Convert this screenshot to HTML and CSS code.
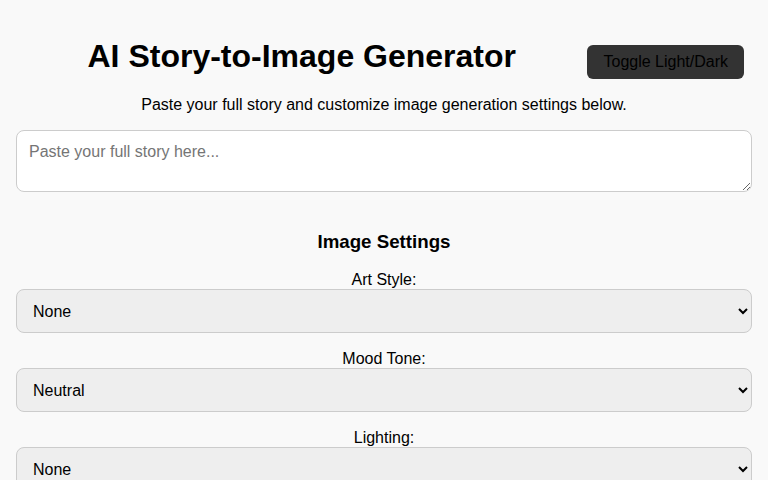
FILE: index.html
```html
<!DOCTYPE html>
<html lang="en">
<head>
    <meta charset="UTF-8">
    <meta name="viewport" content="width=device-width, initial-scale=1.0">
    <title>AI Story-to-Image Generator</title>
    <link rel="stylesheet" href="styles.css">
</head>
<body>

    <header class="top-bar">
        <h1>AI Story-to-Image Generator</h1>
        <button id="toggle-theme">Toggle Light/Dark</button>
    </header>

    <p class="intro">Paste your full story and customize image generation settings below.</p>

    <textarea id="story" placeholder="Paste your full story here..."></textarea>

    <h3>Image Settings</h3>

    <label for="art-style">Art Style:</label>
    <select id="art-style">
        <option>None</option>
        <option>Watercolor</option>
        <option>Anime</option>
    </select>

    <label for="mood">Mood Tone:</label>
    <select id="mood">
        <option>Neutral</option>
        <option>Happy</option>
        <option>Dark</option>
    </select>

    <label for="lighting">Lighting:</label>
    <select id="lighting">
        <option>None</option>
        <option>Soft</option>
        <option>Dramatic</option>
    </select>

</body>
</html>
```

FILE: styles.css
```css
body {
    font-family: "Liberation Sans", Arial, sans-serif;
    background-color: #f9f9f9;
    color: #000;
    margin: 0;
    padding: 16px;
}

.top-bar {
    display: flex;
    align-items: flex-start;
    padding-right: 8px;
}

.top-bar h1 {
    flex: 1;
    text-align: center;
    font-size: 32px;
    line-height: 37px;
    margin: 22px 0 21px;
}

#toggle-theme {
    margin-top: 29px;
    height: 34px;
    padding: 0 16px;
    background-color: #333;
    color: #000;
    border: none;
    border-radius: 6px;
    font-family: inherit;
    font-size: 16px;
    cursor: pointer;
}

.intro {
    margin: 0 0 16px;
    text-align: center;
    font-size: 16px;
    line-height: 18px;
}

textarea {
    display: block;
    width: 100%;
    box-sizing: border-box;
    height: 62px;
    padding: 12px;
    border: 1px solid #ccc;
    border-radius: 8px;
    background-color: #fff;
    font-family: inherit;
    font-size: 16px;
}

textarea::placeholder {
    color: #757575;
}

h3 {
    text-align: center;
    font-size: 18.72px;
    line-height: 22px;
    margin: 39px 0 17px;
}

label {
    display: block;
    text-align: center;
    font-size: 16px;
    line-height: 19px;
}

select {
    display: block;
    width: 100%;
    box-sizing: border-box;
    height: 44px;
    padding: 0 12px;
    margin-bottom: 16px;
    background-color: #eee;
    border: 1px solid #ccc;
    border-radius: 8px;
    font-family: inherit;
    font-size: 16px;
    color: #000;
}
```
